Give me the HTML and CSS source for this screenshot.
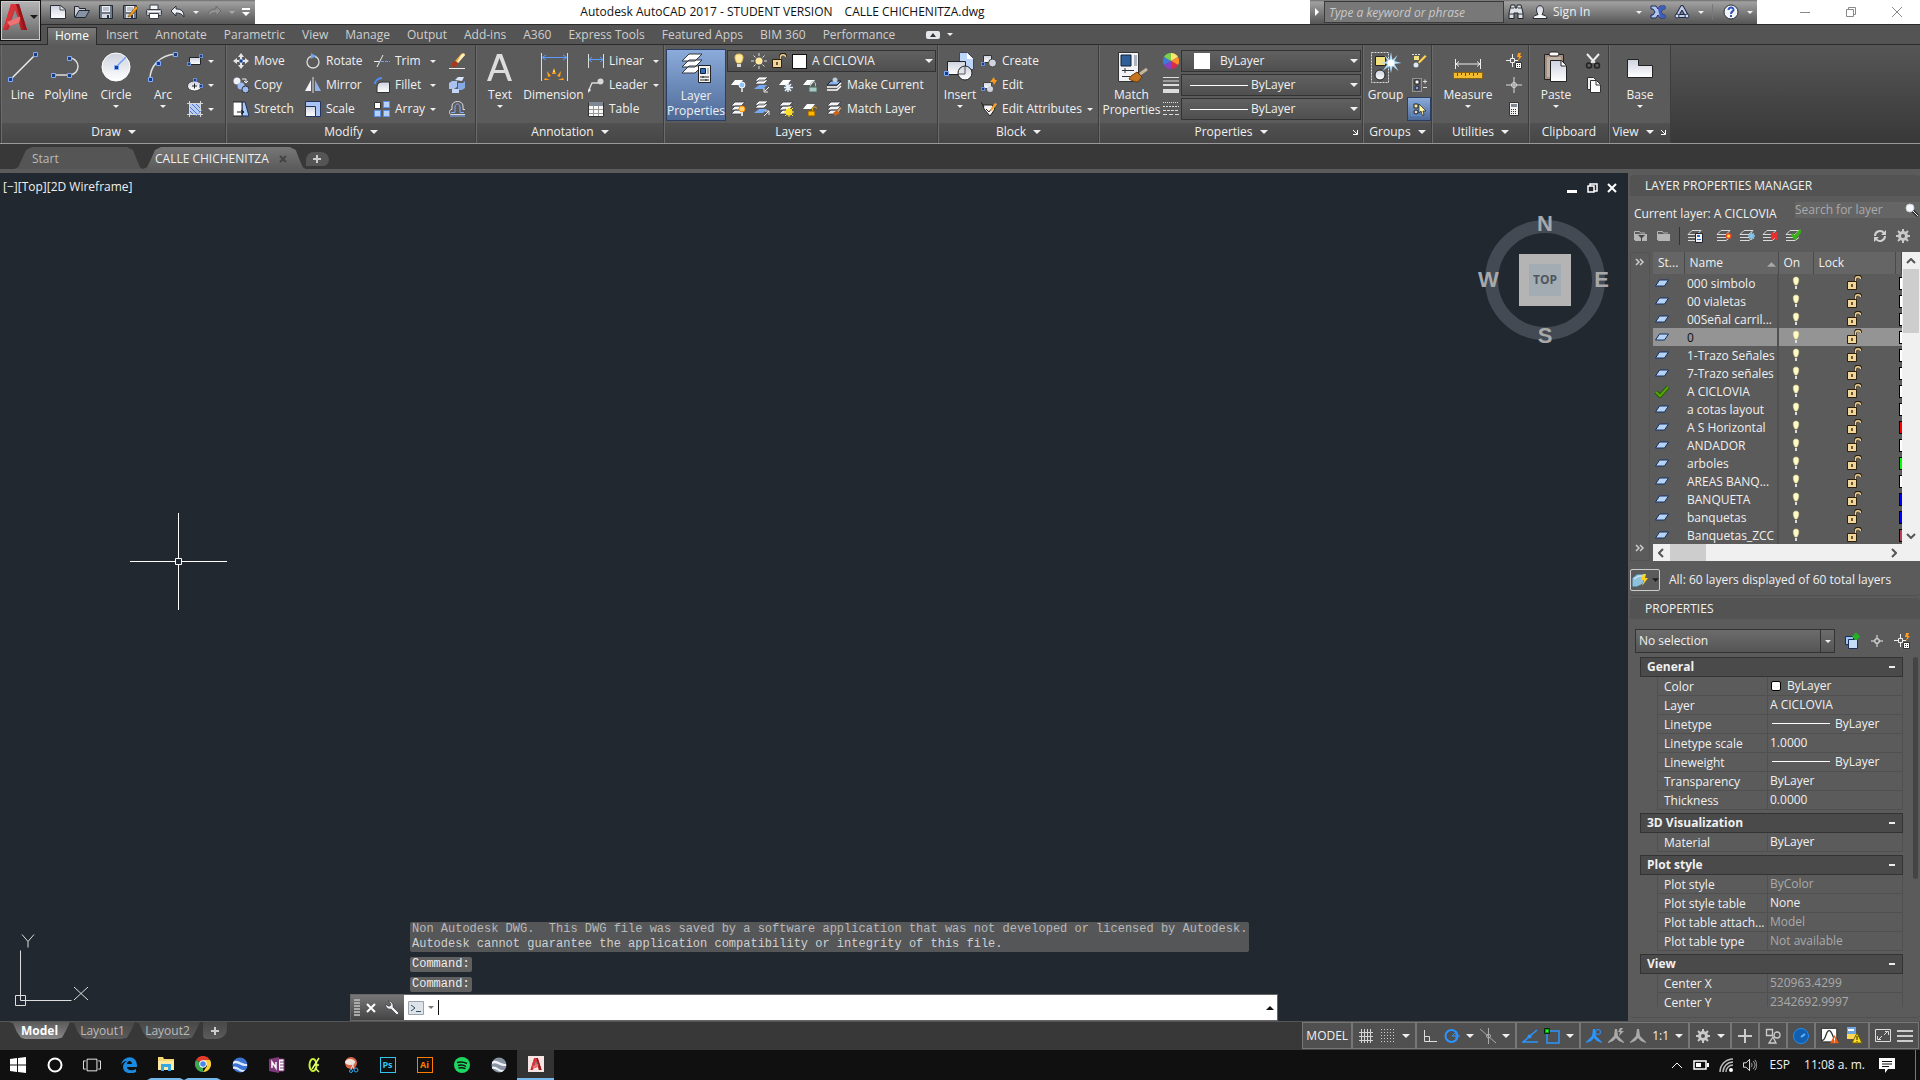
FILE: index.html
```
<!DOCTYPE html>
<html lang="en">
<head>
    <meta charset="UTF-8">
    <title>Autodesk AutoCAD 2017</title>
    <link rel="stylesheet" href="styles.css">
</head>
<body>
    <!-- Icon sprite -->
    <svg class="sprite" aria-hidden="true">
        <defs>
            <linearGradient id="silver" x1="0" y1="0" x2="0" y2="1"><stop offset="0" stop-color="#cdd2de"/><stop offset="1" stop-color="#fff"/></linearGradient>
            <linearGradient id="red" x1="0" y1="0" x2="1" y2="1"><stop offset="0" stop-color="#e8454a"/><stop offset="1" stop-color="#a3161b"/></linearGradient>
        </defs>
        <symbol id="dot" viewBox="0 0 5 5"><path d="M.5.5h4v4h-4z" fill="#1d3d7c" stroke="#7eaaff"/></symbol>
        <symbol id="caret" viewBox="0 0 8 4"><path d="M0 0h8L4 4z" fill="currentColor"/></symbol>
        <symbol id="logo" viewBox="0 0 24 26"><path d="M8 0h8l8 26h-6l-2-7-9 3-2 4H0z" fill="url(#red)"/><path d="M12 6l3 8-7 3z" fill="#8a8a8a"/><path d="M8 0l4 1-6 19-6 6z" fill="#d8343a"/><path d="M4 18l14-6-2 7-9 3z" fill="#ee7375"/><path d="M13 0l3 0 8 26h-3z" fill="#96151b"/></symbol>

        <!-- quick access -->
        <symbol id="new" viewBox="0 0 16 16"><path d="M.5 1.500h10l5 4v9H.5z" fill="url(#silver)" stroke="#2b2f36"/><path d="M10 2v4h5" fill="none" stroke="#555"/></symbol>
        <symbol id="open" viewBox="0 0 16 16"><path d="M.5 13V2.500h4l1 2h6v3" fill="#c9ccd4" stroke="#22272f"/><path d="M1 13.500l4-7h10.500l-4 7z" fill="#8593a5" stroke="#22272f"/></symbol>
        <symbol id="save" viewBox="0 0 16 16"><path d="M1.500 1.500h13v13h-13z" fill="#6f7a88" stroke="#242a33"/><path d="M4 2h8v6H4z" fill="#eef0f5"/><path d="M4 10h8v4H4z" fill="#d5d8df"/><path d="M5 4h6M5 6h6" stroke="#8b93a0"/><path d="M9 11h2v3H9z" fill="#30363f"/></symbol>
        <symbol id="saveas" viewBox="0 0 16 16"><use href="#save"/><path d="M7 11l7-9 2 2-7 8-3 1z" fill="#f5a623" stroke="#7a3d00" stroke-width=".6"/></symbol>
        <symbol id="print" viewBox="0 0 16 16"><path d="M4 1h8v5H4z" fill="#f3f5f9" stroke="#3a3f47"/><rect x=".5" y="5.500" width="15" height="6" rx="1" fill="#b9bec9" stroke="#3a3f47"/><path d="M3.500 9.500h9v5h-9z" fill="#fff" stroke="#3a3f47"/><path d="M2 7.500h12" stroke="#fff"/></symbol>
        <symbol id="undo" viewBox="0 0 16 16"><path d="M6 2v3c5 0 8 2 8 8-2-3-4-4-8-4v3L1 7z" fill="#eceff4" stroke="#2e333a"/></symbol>
        <symbol id="redo" viewBox="0 0 16 16"><path d="M10 2v3C5 5 2 7 2 13c2-3 4-4 8-4v3l5-5z" fill="#909090" stroke="#6a6a6a"/></symbol>
        <symbol id="more" viewBox="0 0 8 8"><path d="M0 0h8v2H0zM0 4h8L4 8z" fill="#fff"/></symbol>
        <symbol id="binoculars" viewBox="0 0 16 16"><path d="M3 1h4v3h2V1h4l2 8v5.500h-5V9H6v5.500H1V9z" fill="#dde1e8" stroke="#1f2329"/><path d="M3 4h3M10 4h3M1 10h5M10 10h5" stroke="#30353d"/></symbol>
        <symbol id="user" viewBox="0 0 16 16"><path d="M1 14.500c0-3 3-3 5-4l-1-2c-3-9 9-9 6 0l-1 2c2 1 5 1 5 4z" fill="url(#silver)" stroke="#252a31"/></symbol>
        <symbol id="exchange" viewBox="0 0 16 16"><path d="M1 2h5l2 3 2-3h5v3h-2l-2 3 2 3h2v3h-5l-2-3-2 3H1v-3h2l2-3-2-3H1z" fill="#b3c5ef" stroke="#1b2a5c"/><path d="M8 5l2-3h5v3h-2l-2 3 2 3h2v3h-5" fill="#3e60bd"/></symbol>
        <symbol id="a360" viewBox="0 0 16 16"><path d="M8 3l5 9H3z" fill="none" stroke="#1f2b4b" stroke-width="4" stroke-linejoin="round"/><path d="M8 3l5 9H3z" fill="none" stroke="#c2cce4" stroke-width="2" stroke-linejoin="round"/><circle cx="3" cy="12" r="2" fill="#dce3f3" stroke="#1f2b4b"/><circle cx="13" cy="12" r="2" fill="#dce3f3" stroke="#1f2b4b"/></symbol>
        <symbol id="help" viewBox="0 0 16 16"><circle cx="8" cy="8" r="7" fill="#f2f4fa" stroke="#2a3038"/><path d="M5.500 6c0-3.500 5.500-3 5 0-.3 1.500-2.500 1.500-2.500 4" fill="none" stroke="#3155b8" stroke-width="2"/><path d="M7 11h2v2H7z" fill="#3155b8"/></symbol>

        <!-- draw -->
        <symbol id="line" viewBox="0 0 32 32"><path d="M4 28L29 3" stroke="#eee" stroke-width="1.500"/><use href="#dot" x="1" y="26" width="5" height="5"/><use href="#dot" x="26" y="1" width="5" height="5"/></symbol>
        <symbol id="pline" viewBox="0 0 32 32"><path d="M3 24h16c12 0 12-17 0-17" fill="none" stroke="#ddd" stroke-width="1.500"/><use href="#dot" x="1" y="22" width="5" height="5"/><use href="#dot" x="17" y="22" width="5" height="5"/><use href="#dot" x="17" y="5" width="5" height="5"/></symbol>
        <symbol id="circle" viewBox="0 0 32 32"><circle cx="16" cy="16" r="14" fill="url(#silver)" stroke="#fff"/><path d="M16 16L26 6" stroke="#6fa0f5" stroke-width="1.500"/><use href="#dot" x="14" y="14" width="5" height="5"/></symbol>
        <symbol id="arc" viewBox="0 0 32 32"><path d="M3 28C3 16 12 4 29 3" fill="none" stroke="#ddd" stroke-width="1.500"/><use href="#dot" x="1" y="26" width="5" height="5"/><use href="#dot" x="9" y="10" width="5" height="5"/><use href="#dot" x="26" y="1" width="5" height="5"/></symbol>
        <symbol id="rect" viewBox="0 0 16 16"><path d="M2.500 4.500h11v7h-11z" fill="url(#silver)" stroke="#20242b"/><use href="#dot" y="9" width="4" height="4"/><use href="#dot" x="12" y="1" width="4" height="4"/></symbol>
        <symbol id="ellipse" viewBox="0 0 16 16"><ellipse cx="7.500" cy="9" rx="7" ry="5" fill="url(#silver)" stroke="#444"/><path d="M5 9h5M7.500 6.500v5" stroke="#222"/><use href="#dot" x="6" y="1" width="4" height="4"/><use href="#dot" x="12" y="7" width="4" height="4"/></symbol>
        <symbol id="hatch" viewBox="0 0 16 16"><path d="M3 3h10v10H3z" fill="#b9cdf3"/><path d="M3 6l7 7M3 10l3 3M5 3l8 8M9 3l4 4" stroke="#4d78ce"/><path d="M2.500 0v16M13.500 0v16M0 2.500h16M0 13.500h16" stroke="#d8d8d8"/><path d="M9 15l6-6" stroke="#6fa0f5"/></symbol>

        <!-- modify -->
        <symbol id="move" viewBox="0 0 16 16"><path d="M8 0l3 4H9v2H7V4H5zM8 16l-3-4h2v-2h2v2h2zM0 8l4-3v2h2v2H4v2zM16 8l-4 3V9h-2V7h2V5z" fill="#e6e6e6"/><use href="#dot" x="6" y="6" width="4" height="4"/></symbol>
        <symbol id="copy" viewBox="0 0 16 16"><circle cx="4" cy="4" r="3.500" fill="#eef1f8"/><circle cx="8" cy="9" r="3.500" fill="#9bbcf2"/><circle cx="12.500" cy="12.500" r="3.500" fill="#9bbcf2" stroke="#333"/><path d="M9 2h4v3M11 4l2 2 2-2" fill="none" stroke="#eee"/></symbol>
        <symbol id="stretch" viewBox="0 0 16 16"><path d="M9 1h3l4 14H9z" fill="#a8c8f8" stroke="#1b2f5f"/><path d="M0 1h9v14H0z" fill="#fff" stroke="#222"/><path d="M4 11h6M8 9l3 2-3 2" fill="none" stroke="#111"/></symbol>
        <symbol id="rotate" viewBox="0 0 16 16"><circle cx="8" cy="9" r="6" fill="none" stroke="#ddd" stroke-width="1.300"/><path d="M6 0l5 3-5 3z" fill="#6fa0f5"/></symbol>
        <symbol id="mirror" viewBox="0 0 16 16"><path d="M6 3v11H0z" fill="#f3f5fa"/><path d="M10 3v11h6z" fill="#8fb2ea"/><path d="M8 0v16" stroke="#ddd"/></symbol>
        <symbol id="scale" viewBox="0 0 16 16"><path d="M.5.5h15v15H.500z" fill="#a8c5f5" stroke="#22355f"/><path d="M.5 5.500h10v10H.500z" fill="url(#silver)" stroke="#22355f"/></symbol>
        <symbol id="trim" viewBox="0 0 16 16"><path d="M0 8.500h5" stroke="#eee"/><path d="M7 8.500h9" stroke="#6fa0f5" stroke-dasharray="3 1"/><path d="M3 14L9 2" stroke="#eee"/></symbol>
        <symbol id="fillet" viewBox="0 0 16 16"><path d="M3 15.500V10c0-3 2-5 5-5h7.500v10.500z" fill="url(#silver)" stroke="#333"/><path d="M1 7c0-3 3-6 7-6" fill="none" stroke="#4f8ff5" stroke-width="2"/></symbol>
        <symbol id="array" viewBox="0 0 16 16"><path d="M.5 1.500h6v6h-6z" fill="#fff" stroke="#333"/><path d="M9.500.5h6v6h-6zM.5 9.500h6v6h-6zM9.500 9.500h6v6h-6z" fill="#b6d1fb" stroke="#5d92ec"/></symbol>
        <symbol id="erase" viewBox="0 0 16 16"><path d="M6 8l7-8 3 2-7 8z" fill="#f5a93c"/><path d="M12 2l3-2 1 2-7 8-1-1z" fill="#fff0c0"/><path d="M3 10l3-2 3 2-2 4-4 0z" fill="#a8381c"/><path d="M0 15.500h16" stroke="#eee"/></symbol>
        <symbol id="explode" viewBox="0 0 16 16"><path d="M6 3l3-3h6l-2 4z" fill="#d9e5fa"/><path d="M0 6l3-2h5v6l-3 2H0z" fill="#a9c3ee"/><path d="M9 6h5l2-2v7l-3 2H9z" fill="#86aae4"/><path d="M3 12h7v4H3z" fill="#c4d6f5"/></symbol>
        <symbol id="offset" viewBox="0 0 16 16"><path d="M2 11.500h4V6c0-4 5-4 5 0v5.500h4M1 15h15" fill="none" stroke="#7eaaff"/><path d="M16 8.500h-2V5c0-6-11-6-11 0v3.500H2c-2 1-2 5 0 5h14" fill="none" stroke="#ddd"/></symbol>

        <!-- annotation -->
        <symbol id="text" viewBox="0 0 32 32"><path d="M3 30L13 3h5l10 27h-4l-3-8H10l-3 8zM11 19h9L15.500 7z" fill="#dcdcdc"/></symbol>
        <symbol id="dimension" viewBox="0 0 32 32"><path d="M3.500 2v28M29.500 2v28" stroke="#ddd"/><path d="M5 6.500h23M8 4L4 6.500 8 9M25 4l4 2.500L25 9" fill="none" stroke="#5a9bff"/><path d="M16 17l2 6h-4zM9 20l4 5-3 1zM23 20l-4 5 3 1zM7 27l5 2H6zM25 27l-5 2h6z" fill="#ff9d1e"/><path d="M15 21l1-3 1 3zM9 21l3 3" fill="#ffe76e"/></symbol>
        <symbol id="linear" viewBox="0 0 16 16"><path d="M.5 1v14M15.500 1v14" stroke="#ddd"/><path d="M1 6.500h14M4 4L1 6.500 4 9M12 4l3 2.500L12 9" fill="none" stroke="#5a9bff"/></symbol>
        <symbol id="leader" viewBox="0 0 16 16"><path d="M0 15l4-9h6" fill="none" stroke="#ddd" stroke-width="1.300"/><circle cx="12.500" cy="4.500" r="3" fill="#d9d9d9"/><path d="M0 16l1-5 2 2z" fill="#eee"/></symbol>
        <symbol id="table" viewBox="0 0 16 16"><path d="M.5 1.500h15v14H.500z" fill="#f7f7f7" stroke="#333"/><path d="M1 1h14v4H1z" fill="#7f8794"/><path d="M1 8.500h14M1 12.500h14M5.500 5v10M10.500 5v10" stroke="#999"/></symbol>

        <!-- layers -->
        <symbol id="stack" viewBox="0 0 16 16"><path d="M5 1h10l-4 4H1zM5 5h10l-4 4H1zM5 9h10l-4 4H1z" fill="#f4f6fa" stroke="#3c3f45" stroke-width=".8"/></symbol>
        <symbol id="layerprops" viewBox="0 0 32 32"><path d="M9 14h13l-7 7H2zM9 8h13l-7 7H2zM9 2h13l-7 7H2z" fill="#fff" stroke="#2f3742"/><path d="M18.500 13.500h12v17h-12z" fill="#f4f4f4" stroke="#222"/><path d="M20.500 16.500h5v5h-5z" fill="#2f6fc4" stroke="#123"/><path d="M27 16h2v6h-2z" fill="#bbb"/><path d="M20 25h9M20 28h9M23 24v2M26 27v2" stroke="#222"/></symbol>
        <symbol id="sheet" viewBox="0 0 16 16"><path d="M5 3h8L9 8H1z" fill="#fff"/></symbol>
        <symbol id="layoff" viewBox="0 0 16 16"><use href="#sheet"/><circle cx="12" cy="8" r="3" fill="#8fc3ff" stroke="#fff"/><path d="M12 11v4" stroke="#ccc" stroke-width="2"/></symbol>
        <symbol id="layiso" viewBox="0 0 16 16"><path d="M5 0h9l-4 4H1zM5 3h9l-4 4H1z" fill="#fff" stroke="#444" stroke-width=".7"/><path d="M5 8h8l-4 4H0z" fill="#76aaf0"/><path d="M15 10l-4 4M10 11v4h4" fill="none" stroke="#eee"/></symbol>
        <symbol id="layuniso" viewBox="0 0 16 16"><path d="M5 0h9l-4 4H1zM5 3h9l-4 4H1z" fill="#fff" stroke="#444" stroke-width=".7"/><path d="M5 8h8l-4 4H0z" fill="#76aaf0"/><path d="M10 15l5-5M11 10h4v4" fill="none" stroke="#eee"/></symbol>
        <symbol id="layfrz" viewBox="0 0 16 16"><use href="#sheet"/><path d="M10 6v9M6 10.500h9M7 7l6 7M13 7l-6 7" stroke="#e3f1ff" stroke-width="1.500"/></symbol>
        <symbol id="laylck" viewBox="0 0 16 16"><use href="#sheet"/><path d="M8.500 9.500V7c0-3 5-3 5 0v2.500" fill="none" stroke="#aac4bf"/><path d="M7 10h8v5H7z" fill="#a9c9c2" stroke="#4c6b65"/></symbol>
        <symbol id="laycur" viewBox="0 0 16 16"><path d="M5 4h10l-4 4H1z" fill="#82b1f2" stroke="#222"/><path d="M1 10h10l4-4M1 13h10l4-4" fill="none" stroke="#fff" stroke-width="1.500"/><circle cx="9" cy="3" r="2.500" fill="#bcd"/></symbol>
        <symbol id="layon" viewBox="0 0 16 16"><use href="#stack"/><circle cx="12" cy="8" r="3" fill="#ffd36a" stroke="#ff8c00"/><path d="M12 11v4" stroke="#ddd" stroke-width="2"/></symbol>
        <symbol id="layunfrz" viewBox="0 0 16 16"><use href="#stack"/><circle cx="11" cy="11" r="3.500" fill="#ffe11a"/><path d="M11 5v11M6 11h10M7 7l8 8M15 7l-8 8" stroke="#ffdc2e"/></symbol>
        <symbol id="layulk" viewBox="0 0 16 16"><use href="#sheet"/><path d="M10.500 11V7.500c0-2 4-2 4 0" fill="none" stroke="#ffb400"/><path d="M6 10h7v5H6z" fill="#ffb400" stroke="#8b5b00"/></symbol>
        <symbol id="laymch" viewBox="0 0 16 16"><use href="#stack"/><path d="M7 12l4-3 3 3-5 3z" fill="#c8651b"/><path d="M12 9l3-2" stroke="#c8a070" stroke-width="2"/></symbol>
        <symbol id="bulb" viewBox="0 0 16 16"><path d="M8 1c-6 0-4 6-2 9h4c2-3 4-9-2-9z" fill="#ffe9a0" stroke="#e8bf57"/><path d="M6 11h4v3H6z" fill="#d8d8d8"/></symbol>
        <symbol id="sun" viewBox="0 0 16 16"><circle cx="8" cy="8" r="3.500" fill="#ffeaa0"/><path d="M8 0v3M8 13v3M0 8h3M13 8h3M2.500 2.500l2 2M11.500 11.500l2 2M13.500 2.500l-2 2M4.500 11.500l-2 2" stroke="#ddd"/></symbol>
        <symbol id="unlock" viewBox="0 0 16 16"><path d="M9.500 7V4c0-4 5-4 5-1v1" fill="none" stroke="#2d200c" stroke-width="3"/><path d="M9.500 7V4c0-3 5-3 5 0" fill="none" stroke="#ecd19a" stroke-width="1.500"/><path d="M1.500 6.500h9v8h-9z" fill="#f2d79d" stroke="#2d200c"/><path d="M6 9v3" stroke="#3a2c10" stroke-width="1.500"/></symbol>

        <!-- block -->
        <symbol id="insert" viewBox="0 0 32 32"><path d="M15.500 1.500h8l6 6v11h-14z" fill="#bcd6fa" stroke="#445"/><path d="M23 2l6 6h-6z" fill="#fff"/><path d="M3.500 10.500h18v13h-18z" fill="url(#silver)" stroke="#222"/><circle cx="21" cy="22" r="7" fill="url(#silver)" stroke="#222"/><path d="M21 15v8h-7" fill="none" stroke="#555"/><use href="#dot" y="20" width="5" height="5"/></symbol>
        <symbol id="create" viewBox="0 0 16 16"><path d="M2.500 2.500h8v7h-8z" fill="url(#silver)" stroke="#333"/><circle cx="11.500" cy="10" r="4" fill="#cfd4de" stroke="#444"/><use href="#dot" y="9" width="4" height="4"/></symbol>
        <symbol id="edit" viewBox="0 0 16 16"><path d="M2.500 5.500h8v6h-8z" fill="url(#silver)" stroke="#444"/><circle cx="9" cy="12" r="3" fill="#cfd4de"/><use href="#dot" y="10" width="4" height="4"/><path d="M13 0l1 3h2l-3 5-1-3-3 0z" fill="#ff9b1a"/></symbol>
        <symbol id="attr" viewBox="0 0 16 16"><path d="M2 4h9l3 4-5 7-6-7z" fill="#f4f4f4" stroke="#222"/><path d="M0 1l3 5M5 8l3 3 6-8" fill="none" stroke="#222"/><path d="M9 9l5-7 2 1-5 7z" fill="#ffa72b"/></symbol>

        <!-- properties -->
        <symbol id="matchprops" viewBox="0 0 32 32"><path d="M2.500 1.500h20v29h-20z" fill="#f1f3f7" stroke="#333"/><path d="M5 4h10v11H5z" fill="#2f5f96" stroke="#123"/><path d="M18 4h3v11h-3z" fill="#aeb4bf"/><path d="M6 19.500h12M6 25.500h8M9 17v5" stroke="#333"/><path d="M15 25l6-4 5 5-4 5c-4 0-7-2-9-3z" fill="#c47321" stroke="#6b3a0a"/><path d="M24 23l7-5" stroke="#c8b59a" stroke-width="3"/></symbol>
        <symbol id="wheel" viewBox="0 0 16 16"><path d="M8 8V0a8 8 0 0 1 7 4z" fill="#ffe56b"/><path d="M8 8l7-4a8 8 0 0 1 0 8z" fill="#ff8d2a"/><path d="M8 8l7 4a8 8 0 0 1-7 4z" fill="#d72e47"/><path d="M8 8v8a8 8 0 0 1-7-4z" fill="#8a3fc7"/><path d="M8 8l-7 4a8 8 0 0 1 0-8z" fill="#3f79e0"/><path d="M8 8L1 4a8 8 0 0 1 7-4z" fill="#7fcf4e"/></symbol>
        <symbol id="weights" viewBox="0 0 16 16"><path d="M0 .5h16M0 4h16" stroke="#ddd"/><path d="M0 8h16" stroke="#ddd" stroke-width="2"/><path d="M0 14h16" stroke="#ddd" stroke-width="4"/></symbol>
        <symbol id="types" viewBox="0 0 16 16"><g stroke="#ddd"><path d="M0 1.500h16" stroke-dasharray="1 1"/><path d="M0 5.500h16" stroke-dasharray="2 1"/><path d="M0 9.500h16" stroke-dasharray="3 1"/><path d="M0 13.500h16" stroke-dasharray="4 2"/></g></symbol>
        <symbol id="launch" viewBox="0 0 6 6"><path d="M1 1l4 4M5.500 1v4.500H1" fill="none" stroke="#fff"/></symbol>

        <!-- groups, utilities, clipboard, view -->
        <symbol id="group" viewBox="0 0 32 32"><path d="M1.500 1.500h17v30h-17z" fill="none" stroke="#ddd" stroke-dasharray="2 1"/><path d="M5.500 5.500h10v9h-10z" fill="#f2df7e" stroke="#222"/><circle cx="10" cy="24" r="5" fill="url(#silver)" stroke="#222"/><path d="M21 1l1.500 8 5-5-3 6 7 2-7 1 4 7-6-5-1.500 7-1.500-7-7 5 5-7-6-1 6-2-3-6 5 5z" fill="#a9dbff"/><circle cx="21" cy="12" r="3.500" fill="#fff"/></symbol>
        <symbol id="ungroup" viewBox="0 0 16 16"><path d="M1 1.500h9" stroke="#ddd" stroke-dasharray="2 1"/><path d="M3 3h5v4H3z" fill="#f2df7e"/><circle cx="5" cy="12" r="2.500" fill="#dfe8f2"/><path d="M7 9l7-7 1.500 1.500-7 7z" fill="#ffd34e"/></symbol>
        <symbol id="groupedit" viewBox="0 0 16 16"><path d="M1.500 1.500h9v13h-9z" fill="none" stroke="#ccc" stroke-dasharray="1 1"/><path d="M4 3h4v4H4z" fill="#fff" stroke="#222"/><circle cx="6" cy="11" r="2" fill="#79a6f0" stroke="#222"/><path d="M12 4.500h4M14 2.500v4M12 10.500h4" stroke="#ddd"/></symbol>
        <symbol id="groupsel" viewBox="0 0 16 16"><path d="M.5 1.500h10v13H.500z" fill="none" stroke="#5fa2ff" stroke-dasharray="1 1"/><path d="M3 3h4v4H3z" fill="#f2e8a0" stroke="#222"/><circle cx="5" cy="11" r="2" fill="#ddd" stroke="#222"/><path d="M8 3l7 7-3 0 1 4-2 0-1-4-2 2z" fill="#fff3a6" stroke="#222" stroke-width=".7"/></symbol>
        <symbol id="measure" viewBox="0 0 32 32"><path d="M3.500 8v10M28.500 8v10M4 13h24M7 10.500L4 13l3 2.500M25 10.500l3 2.500-3 2.500" fill="none" stroke="#eee"/><path d="M1.500 21.500h29v6h-29z" fill="#f3bc2e" stroke="#8a6410"/><path d="M5.500 22v3M9.500 22v2M13.500 22v3M17.500 22v2M21.500 22v3M25.500 22v2" stroke="#6b4c06"/></symbol>
        <symbol id="quickselect" viewBox="0 0 16 16"><path d="M0 7.500h12M6.500 1v13" stroke="#eee"/><path d="M4.500 5.500h4v4h-4z" fill="#5b5b5b" stroke="#eee"/><path d="M9.500 9.500h6v6h-6z" fill="#fff" stroke="#333"/><path d="M11 11.500h3M11 13.500h3" stroke="#333" stroke-dasharray="1 1"/><path d="M12 0h3l-1 3h2l-4 5 1-4h-2z" fill="#ff9b1a"/></symbol>
        <symbol id="target" viewBox="0 0 16 16"><path d="M0 8h16M8 0v16" stroke="#ddd"/><circle cx="8" cy="8" r="2.500" fill="none" stroke="#ddd"/></symbol>
        <symbol id="pick" viewBox="0 0 16 16"><path d="M2 8h12M8 2v12" stroke="#eee"/><path d="M6 6h4v4H6z" fill="#5b5b5b" stroke="#eee"/></symbol>
        <symbol id="calc" viewBox="0 0 16 16"><path d="M3.500 1.500h9v13h-9z" fill="#f1f1f1" stroke="#333"/><path d="M5 3h6v3H5z" fill="#7e8793"/><path d="M5 8.500h6M5 10.500h6M5 12.500h6" stroke="#333" stroke-dasharray="1 1"/></symbol>
        <symbol id="paste" viewBox="0 0 32 32"><path d="M4.500 3.500h19v25h-19z" fill="#a58f80" stroke="#222"/><path d="M7 6h14v20H7z" fill="#beb0a5"/><rect x="9" y="1" width="10" height="4" rx="2" fill="#fff" stroke="#222"/><path d="M10.500 9.500h11l5 5v16h-16z" fill="url(#silver)" stroke="#222"/><path d="M21 10v5h5" fill="#fff" stroke="#222"/></symbol>
        <symbol id="cut" viewBox="0 0 16 16"><path d="M2 1l8 9M14 1L6 10" stroke="#eee" stroke-width="2"/><circle cx="4" cy="12.500" r="2.500" fill="none" stroke="#222" stroke-width="1.500"/><circle cx="12" cy="12.500" r="2.500" fill="none" stroke="#222" stroke-width="1.500"/></symbol>
        <symbol id="clipcopy" viewBox="0 0 16 16"><path d="M2.500.5h6l2 2v10h-8z" fill="#eee" stroke="#333"/><path d="M5.500 3.500h6l4 4v8h-10z" fill="#fff" stroke="#333"/><path d="M11 4v4h4" fill="none" stroke="#333"/></symbol>
        <symbol id="base" viewBox="0 0 32 32"><path d="M3.500 8.500h11v6h14v12h-25z" fill="url(#silver)" stroke="#222"/></symbol>

        <!-- palettes -->
        <symbol id="lens" viewBox="0 0 16 16"><circle cx="6" cy="6" r="4" fill="#f4f8ff" stroke="#ccc"/><path d="M9 9l5 5" stroke="#222" stroke-width="3"/><path d="M9 9l5 5" stroke="#fff"/></symbol>
        <symbol id="folder" viewBox="0 0 16 16"><path d="M2 13V6h12v7z" fill="#b5b5b5"/><path d="M1.500 12V3.500h5l1 1.500H12" fill="none" stroke="#b5b5b5"/></symbol>
        <symbol id="filter" viewBox="0 0 16 16"><use href="#folder"/><path d="M5 7h7L9 10v3H8v-3z" fill="#444"/></symbol>
        <symbol id="pstack" viewBox="0 0 16 16"><path d="M5 2.500h9l-4 4H1zM1 9.500h9l4-3M1 12.500h9l4-3" fill="none" stroke="#ddd"/></symbol>
        <symbol id="states" viewBox="0 0 16 16"><use href="#pstack"/><path d="M8.500 5.500h7v9h-7z" fill="#f4f4f4" stroke="#223"/><path d="M10 7h3v2h-3z" fill="#2d6fc4"/><path d="M10 11.500h4" stroke="#2d6fc4"/></symbol>
        <symbol id="laynew" viewBox="0 0 16 16"><use href="#pstack"/><circle cx="12.500" cy="8" r="3" fill="#f44b1e"/><circle cx="12.500" cy="8" r="1.500" fill="#ffe84b"/></symbol>
        <symbol id="layvp" viewBox="0 0 16 16"><use href="#pstack"/><path d="M12.500 4v8M9 8h7M10 5.500l5 5M15 5.500l-5 5" stroke="#86c5ea" stroke-width="1.500"/></symbol>
        <symbol id="laydel" viewBox="0 0 16 16"><use href="#pstack"/><path d="M9.500 5l6 6M15.500 5l-6 6" stroke="#f52a2a" stroke-width="3"/></symbol>
        <symbol id="layset" viewBox="0 0 16 16"><use href="#pstack"/><path d="M7 6l3 4 6-8" fill="none" stroke="#35b412" stroke-width="3"/></symbol>
        <symbol id="refresh" viewBox="0 0 16 16"><path d="M3 8a5 5 0 0 1 9-3M13 8a5 5 0 0 1-9 3" fill="none" stroke="#d0d0d0" stroke-width="2"/><path d="M14 2v5H9zM2 14V9h5z" fill="#d0d0d0"/></symbol>
        <symbol id="gear" viewBox="0 0 16 16"><circle cx="8" cy="8" r="3.500" fill="none" stroke="#c9c9c9" stroke-width="3"/><path d="M8 1v3M8 12v3M1 8h3M12 8h3M3 3l2 2M11 11l2 2M13 3l-2 2M5 11l-2 2" stroke="#c9c9c9" stroke-width="2"/></symbol>
        <symbol id="layer" viewBox="0 0 16 8"><path d="M5.500 1h9l-4 6h-9z" fill="#b5d3f5" stroke="#17305e"/></symbol>
        <symbol id="check" viewBox="0 0 16 13"><path d="M2 7l4 4 8-9" fill="none" stroke="#1f5a08" stroke-width="4"/><path d="M2 7l4 4 8-9" fill="none" stroke="#55a800" stroke-width="2"/></symbol>
        <symbol id="on" viewBox="0 0 8 14"><path d="M4 1c-4 0-3 5-1 8h2c2-3 3-8-1-8z" fill="#fffbc6" stroke="#d9cf8a" stroke-width=".6"/><path d="M3 10h2v3H3z" fill="#ddd"/></symbol>
        <symbol id="chevrons" viewBox="0 0 10 8"><path d="M1 1l3 3-3 3M5 1l3 3-3 3" fill="none" stroke="#ccc" stroke-width="1.500"/></symbol>
        <symbol id="up" viewBox="0 0 10 6"><path d="M1 5l4-4 4 4" fill="none" stroke="currentColor" stroke-width="2"/></symbol>
        <symbol id="down" viewBox="0 0 10 6"><path d="M1 1l4 4 4-4" fill="none" stroke="currentColor" stroke-width="2"/></symbol>
        <symbol id="left" viewBox="0 0 6 10"><path d="M5 1L1 5l4 4" fill="none" stroke="currentColor" stroke-width="2"/></symbol>
        <symbol id="right" viewBox="0 0 6 10"><path d="M1 1l4 4-4 4" fill="none" stroke="currentColor" stroke-width="2"/></symbol>
        <symbol id="isolate" viewBox="0 0 16 16"><path d="M0 6l5-4h9l-3 10-6 3H0z" fill="#8fc0dc" stroke="#45606e"/><path d="M2 7l5-3h5" fill="none" stroke="#e6f4ff"/><path d="M11 2h3l-1 4h3l-6 8 2-6h-3z" fill="#ffd21f"/></symbol>
        <symbol id="pickadd" viewBox="0 0 16 16"><path d="M1.500 3.500h8v8h-8z" fill="#9cc3f2" stroke="#1c2f55"/><path d="M4.500 6.500h9v9h-9z" fill="#c5dcf8" stroke="#1c2f55"/><path d="M12 0v7M8.500 3.500h7" stroke="#20b520" stroke-width="3"/></symbol>

        <!-- status bar -->
        <symbol id="grid" viewBox="0 0 16 16"><path d="M3.500 1v14M6.500 1v14M9.500 1v14M12.500 1v14" stroke="#d5d5d5"/><path d="M1 4.500h14M1 8.500h14M1 12.500h14" stroke="#d5d5d5" stroke-dasharray="2 1"/></symbol>
        <symbol id="snap" viewBox="0 0 16 16"><path d="M1 1.500h14M1 4.500h14M1 7.500h14M1 10.500h14M1 13.500h14" stroke="#ccc" stroke-dasharray="1 2"/></symbol>
        <symbol id="ortho" viewBox="0 0 16 16"><path d="M2.500 2v11.500H15M2.500 8.500h5v5" fill="none" stroke="#ddd"/></symbol>
        <symbol id="polar" viewBox="0 0 16 16"><circle cx="7.500" cy="8" r="6" fill="none" stroke="#2b95ff" stroke-width="2"/><path d="M8 8h8M8 8l5-5M12 5v6" fill="none" stroke="#2b95ff"/></symbol>
        <symbol id="iso" viewBox="0 0 16 16"><path d="M8.500 0v16M0 1l16 14" stroke="#aaa"/><circle cx="8.500" cy="8" r="2" fill="none" stroke="#aaa"/></symbol>
        <symbol id="otrack" viewBox="0 0 16 16"><path d="M15 2L1 14h15" fill="none" stroke="#2b95ff" stroke-width="1.500"/><circle cx="7.500" cy="8.500" r="2" fill="#2b95ff"/></symbol>
        <symbol id="osnap" viewBox="0 0 16 16"><path d="M3 3h12v12H3z" fill="none" stroke="#2b95ff" stroke-width="1.500"/><path d="M.5.5h5v5h-5z" fill="#0a0" stroke="#021"/><path d="M2 2h2v2H2z" fill="#2f2"/></symbol>
        <symbol id="scaleicon" viewBox="0 0 16 16"><path d="M7 1h2l1 7 6 6v1l-5-2-3-3-3 3-5 2v-1l6-6z" fill="currentColor"/></symbol>
        <symbol id="annovis" viewBox="0 0 16 16"><use href="#scaleicon"/><circle cx="12" cy="4" r="2.500" fill="#505050" stroke="currentColor"/></symbol>
        <symbol id="annoauto" viewBox="0 0 16 16"><use href="#scaleicon"/><path d="M12 0l-2 4h2l-1 4 5-5h-3l2-3z" fill="currentColor"/></symbol>
        <symbol id="plus" viewBox="0 0 16 16"><path d="M1 8h14M8 1v14" stroke="#ccc" stroke-width="2"/></symbol>
        <symbol id="shapes" viewBox="0 0 16 16"><path d="M1.500 1.500h6v6h-6zM8 9l3 6H4z" fill="none" stroke="#ccc" stroke-width="1.300"/><circle cx="12" cy="7" r="3" fill="none" stroke="#ccc" stroke-width="1.300"/></symbol>
        <symbol id="perf" viewBox="0 0 16 16"><circle cx="8" cy="8" r="7.500" fill="#115fae" stroke="#1f8cf5"/><path d="M8 9l4-3" stroke="#62b6ff" stroke-width="2"/></symbol>
        <symbol id="trace" viewBox="0 0 20 18"><path d="M.5.5h17v15H.500z" fill="#fff" stroke="#222"/><path d="M1 14c5 0 4-11 8-11s4 11 8 11" fill="none" stroke="#333" stroke-width="1.500"/><path d="M15 8l5 9H10z" fill="#f05a13"/><path d="M15 11v3M15 15v1" stroke="#fff"/></symbol>
        <symbol id="warn" viewBox="0 0 16 18"><path d="M1 0h9v12H1z" fill="#6ea6e4"/><path d="M1 7h9v5H1z" fill="#ffd955"/><path d="M2 3h6" stroke="#fff" stroke-width="2"/><path d="M11 6l5 10H6z" fill="#ffe01a" stroke="#775e00"/><path d="M11 9v4M11 14v1" stroke="#222"/></symbol>
        <symbol id="clean" viewBox="0 0 16 14"><path d="M.5.5h15v12H.500z" fill="none" stroke="#ddd"/><path d="M9 6l4-4M10 2.500h3.500V6M7 7l-4 4M2.500 7v3.500H6" fill="none" stroke="#ddd"/></symbol>
        <symbol id="burger" viewBox="0 0 16 16"><path d="M0 3h16M0 8h16M0 13h16" stroke="#ccc" stroke-width="2"/></symbol>
        <symbol id="wrench" viewBox="0 0 16 16"><path d="M3 1l3 3-1 2-2 0-2-2c-1 3 2 6 5 5l6 6 2-2-6-6c1-3-2-6-5-6z" fill="#eef1f5" stroke="#333" stroke-width=".7"/></symbol>
        <symbol id="prompt" viewBox="0 0 16 14"><path d="M.5.5h15v13H.500z" fill="#dde3ea" stroke="#9aa3ad"/><path d="M3 4l4 3-4 3M8 10.500h5" fill="none" stroke="#3a4a58"/></symbol>

        <!-- taskbar -->
        <symbol id="win" viewBox="0 0 16 16"><path d="M0 2l7-1v6.500H0zM8 1l8-1v7.500H8zM0 8.500h7V15l-7-1zM8 8.500h8V16l-8-1z" fill="#fff"/></symbol>
        <symbol id="cortana" viewBox="0 0 16 16"><circle cx="8" cy="8" r="6.500" fill="none" stroke="#fff" stroke-width="2"/></symbol>
        <symbol id="taskview" viewBox="0 0 20 16"><path d="M4.500 1.500h11v13h-11zM3 3.500H.500v9H3M17 3.500h2.500v9H17" fill="none" stroke="#fff"/></symbol>
        <symbol id="edge" viewBox="0 0 16 16"><path d="M0 8c2-10 16-11 16 1v1H6c0 4 6 4 9 2v3C10 18 2 16 2 10c0-3 2-5 4-6-3 0-5 2-6 4zM6 7h5c0-4-5-4-5 0z" fill="#1a8be0"/></symbol>
        <symbol id="files" viewBox="0 0 16 16"><path d="M0 14V1h5l1 2h10v11z" fill="#f8d775"/><path d="M0 5h16v9H0z" fill="#ffe9a2"/><path d="M3 15V8h10v7h-3v-4H6v4z" fill="#35a7e5"/></symbol>
        <symbol id="chrome" viewBox="0 0 16 16"><path d="M8 8L1 4a8 8 0 0 1 14 0z" fill="#e33b2e"/><path d="M1 4l7 4 0 8A8 8 0 0 1 1 4z" fill="#3fa652"/><path d="M8 4h7a8 8 0 0 1-7 12l4-6z" fill="#fbce3b"/><circle cx="8" cy="8" r="3.700" fill="#fff"/><circle cx="8" cy="8" r="2.800" fill="#4a86ed"/></symbol>
        <symbol id="earth" viewBox="0 0 16 16"><circle cx="8" cy="8" r="7.500" fill="#3b74d4"/><path d="M1 5c4-4 8 2 14 2v2C9 10 6 4 1 7zM1 10c4-2 7 4 12 3l-2 2c-4 0-6-4-10-3z" fill="#dce9ff"/></symbol>
        <symbol id="earthpro" viewBox="0 0 16 16"><circle cx="8" cy="8" r="7.500" fill="#8793a3"/><path d="M1 5c4-4 8 2 14 2v2C9 10 6 4 1 7zM1 10c4-2 7 4 12 3l-2 2c-4 0-6-4-10-3z" fill="#eef2f6"/></symbol>
        <symbol id="onenote" viewBox="0 0 16 16"><path d="M9 2h6v12H9z" fill="#fff" stroke="#80397b"/><path d="M11 5h4M11 8h4M11 11h4" stroke="#80397b"/><path d="M0 2l10-2v16L0 14z" fill="#80397b"/><path d="M3 11V5l4 6V5" fill="none" stroke="#fff" stroke-width="1.500"/></symbol>
        <symbol id="qgis" viewBox="0 0 16 16"><ellipse cx="7" cy="8" rx="3.500" ry="6" fill="none" stroke="#c8f03a" stroke-width="2"/><path d="M6 12l7-11M8 8h5M9 11l4 4" fill="none" stroke="#e3ff70" stroke-width="1.500"/></symbol>
        <symbol id="snip" viewBox="0 0 16 16"><circle cx="8" cy="6" r="6" fill="#d9674b"/><ellipse cx="7" cy="5" rx="5" ry="3" fill="#f2e3dc"/><path d="M8 4l3 8M12 4L8 12" stroke="#ddd"/><circle cx="8" cy="14" r="1.500" fill="none" stroke="#39a4e5"/><circle cx="13" cy="13" r="2" fill="none" stroke="#39a4e5"/></symbol>
        <symbol id="spotify" viewBox="0 0 16 16"><circle cx="8" cy="8" r="8" fill="#1ed760"/><path d="M3 5.500c4-1 7-.5 10 1M4 8.500c3-1 6-.5 8 1M4.500 11c3-.7 5-.3 7 .7" fill="none" stroke="#111" stroke-width="1.500"/></symbol>
        <symbol id="battery" viewBox="0 0 16 10"><path d="M1 1h12v8H1z" fill="none" stroke="#fff" stroke-width="1.500"/><path d="M3 3h5v4H3zM14 3h2v4h-2z" fill="#fff"/></symbol>
        <symbol id="wifi" viewBox="0 0 14 14"><path d="M1 14A13 13 0 0 1 14 1M4 14A10 10 0 0 1 14 4M7 14a7 7 0 0 1 7-7" fill="none" stroke="#bbb" stroke-width="1.500"/><circle cx="12" cy="12" r="2" fill="#fff"/></symbol>
        <symbol id="sound" viewBox="0 0 16 14"><path d="M.5 4.500h3l4-4v13l-4-4h-3z" fill="none" stroke="#fff"/><path d="M9.500 4.500c1 1 1 4 0 5M11.500 2.500c3 3 3 6 0 9M13.500 1c3 4 3 8 0 12" fill="none" stroke="#bbb"/></symbol>
        <symbol id="note" viewBox="0 0 16 16"><path d="M0 1h16v11H9l-3 4v-4H0z" fill="#fff"/><path d="M3 4.500h10M3 7h10M3 9.500h7" stroke="#111"/></symbol>
    </svg>

    <header class="titlebar">
        <button class="app-button" aria-label="Application menu"><svg class="logo"><use href="#logo"/></svg><svg class="caret dark"><use href="#caret"/></svg></button>
        <div class="quick-access">
            <button aria-label="New"><svg><use href="#new"/></svg></button>
            <button aria-label="Open"><svg><use href="#open"/></svg></button>
            <button aria-label="Save"><svg><use href="#save"/></svg></button>
            <button aria-label="Save As"><svg><use href="#saveas"/></svg></button>
            <button aria-label="Plot"><svg><use href="#print"/></svg></button>
            <button aria-label="Undo"><svg><use href="#undo"/></svg></button>
            <svg class="caret tiny"><use href="#caret"/></svg>
            <button aria-label="Redo"><svg><use href="#redo"/></svg></button>
            <svg class="caret tiny muted"><use href="#caret"/></svg>
            <button class="qa-more" aria-label="Customize"><svg class="more"><use href="#more"/></svg></button>
        </div>
        <h1 class="app-title"><span>Autodesk AutoCAD 2017 - STUDENT VERSION</span><span>CALLE CHICHENITZA.dwg</span></h1>
        <div class="infocenter">
            <svg class="play" viewBox="0 0 4 8"><path d="M0 0l4 4-4 4z" fill="#fff"/></svg>
            <input class="keyword" type="text" placeholder="Type a keyword or phrase" aria-label="Keyword">
            <button aria-label="Search"><svg><use href="#binoculars"/></svg></button>
            <button class="sign-in"><svg><use href="#user"/></svg>Sign In</button>
            <svg class="caret tiny sign-caret"><use href="#caret"/></svg>
            <button aria-label="Exchange apps"><svg><use href="#exchange"/></svg></button>
            <button aria-label="Stay connected"><svg><use href="#a360"/></svg></button>
            <svg class="caret tiny"><use href="#caret"/></svg>
            <button class="help" aria-label="Help"><svg><use href="#help"/></svg></button>
            <svg class="caret tiny"><use href="#caret"/></svg>
        </div>
        <div class="window-buttons">
            <button aria-label="Minimize"><svg viewBox="0 0 12 12"><path d="M1 6.500h10" stroke="#888"/></svg></button>
            <button aria-label="Restore"><svg viewBox="0 0 12 12"><path d="M1.500 3.500h7v7h-7zM3.500 3.500v-2h7v7h-2" fill="none" stroke="#888"/></svg></button>
            <button aria-label="Close"><svg viewBox="0 0 12 12"><path d="M1 1l10 10M11 1L1 11" stroke="#888"/></svg></button>
        </div>
    </header>

    <nav class="ribbon-tabs">
        <button class="active">Home</button><button>Insert</button><button>Annotate</button><button>Parametric</button><button>View</button><button>Manage</button><button>Output</button><button>Add-ins</button><button>A360</button><button>Express Tools</button><button>Featured Apps</button><button>BIM 360</button><button>Performance</button>
        <button class="ribbon-min" aria-label="Minimize ribbon"><svg viewBox="0 0 14 8"><rect width="14" height="8" rx="2" fill="#e4e6ec"/><path d="M4 6h6L7 2z" fill="#333"/></svg></button>
        <svg class="caret tiny"><use href="#caret"/></svg>
    </nav>

    <section class="ribbon">
        <div class="panel draw">
            <div class="tools">
                <button class="big"><svg><use href="#line"/></svg>Line</button>
                <button class="big"><svg><use href="#pline"/></svg>Polyline</button>
                <button class="big"><svg><use href="#circle"/></svg>Circle<svg class="caret tiny"><use href="#caret"/></svg></button>
                <button class="big"><svg><use href="#arc"/></svg>Arc<svg class="caret tiny"><use href="#caret"/></svg></button>
                <div class="stack">
                    <button class="small" aria-label="Rectangle"><svg><use href="#rect"/></svg><svg class="caret tiny"><use href="#caret"/></svg></button>
                    <button class="small" aria-label="Ellipse"><svg><use href="#ellipse"/></svg><svg class="caret tiny"><use href="#caret"/></svg></button>
                    <button class="small" aria-label="Hatch"><svg><use href="#hatch"/></svg><svg class="caret tiny"><use href="#caret"/></svg></button>
                </div>
            </div>
            <button class="panel-title">Draw<svg class="caret"><use href="#caret"/></svg></button>
        </div>

        <div class="panel modify">
            <div class="tools">
                <div class="stack">
                    <button class="small"><svg><use href="#move"/></svg>Move</button>
                    <button class="small"><svg><use href="#copy"/></svg>Copy</button>
                    <button class="small"><svg><use href="#stretch"/></svg>Stretch</button>
                </div>
                <div class="stack">
                    <button class="small"><svg><use href="#rotate"/></svg>Rotate</button>
                    <button class="small"><svg><use href="#mirror"/></svg>Mirror</button>
                    <button class="small"><svg><use href="#scale"/></svg>Scale</button>
                </div>
                <div class="stack spread">
                    <button class="small"><svg><use href="#trim"/></svg>Trim<svg class="caret tiny"><use href="#caret"/></svg></button>
                    <button class="small"><svg><use href="#fillet"/></svg>Fillet<svg class="caret tiny"><use href="#caret"/></svg></button>
                    <button class="small"><svg><use href="#array"/></svg>Array<svg class="caret tiny"><use href="#caret"/></svg></button>
                </div>
                <div class="stack">
                    <button class="small" aria-label="Erase"><svg><use href="#erase"/></svg></button>
                    <button class="small" aria-label="Explode"><svg><use href="#explode"/></svg></button>
                    <button class="small" aria-label="Offset"><svg><use href="#offset"/></svg></button>
                </div>
            </div>
            <button class="panel-title">Modify<svg class="caret"><use href="#caret"/></svg></button>
        </div>

        <div class="panel annotation">
            <div class="tools">
                <button class="big"><svg><use href="#text"/></svg>Text<svg class="caret tiny"><use href="#caret"/></svg></button>
                <button class="big"><svg><use href="#dimension"/></svg>Dimension</button>
                <div class="stack spread">
                    <button class="small"><svg><use href="#linear"/></svg>Linear<svg class="caret tiny"><use href="#caret"/></svg></button>
                    <button class="small"><svg><use href="#leader"/></svg>Leader<svg class="caret tiny"><use href="#caret"/></svg></button>
                    <button class="small"><svg><use href="#table"/></svg>Table</button>
                </div>
            </div>
            <button class="panel-title">Annotation<svg class="caret"><use href="#caret"/></svg></button>
        </div>

        <div class="panel layers">
            <div class="tools">
                <button class="big pressed"><svg><use href="#layerprops"/></svg>Layer<br>Properties</button>
                <div class="layer-tools">
                    <div class="combo">
                        <svg><use href="#bulb"/></svg><svg><use href="#sun"/></svg><svg><use href="#unlock"/></svg><i class="swatch outlined"></i>
                        <select aria-label="Layer"><option>A CICLOVIA</option></select>
                        <svg class="caret"><use href="#caret"/></svg>
                    </div>
                    <div class="tool-row">
                        <button class="small" aria-label="Off"><svg><use href="#layoff"/></svg></button>
                        <button class="small" aria-label="Isolate"><svg><use href="#layiso"/></svg></button>
                        <button class="small" aria-label="Freeze"><svg><use href="#layfrz"/></svg></button>
                        <button class="small" aria-label="Lock"><svg><use href="#laylck"/></svg></button>
                        <button class="small"><svg><use href="#laycur"/></svg>Make Current</button>
                    </div>
                    <div class="tool-row">
                        <button class="small" aria-label="Turn all on"><svg><use href="#layon"/></svg></button>
                        <button class="small" aria-label="Unisolate"><svg><use href="#layuniso"/></svg></button>
                        <button class="small" aria-label="Thaw"><svg><use href="#layunfrz"/></svg></button>
                        <button class="small" aria-label="Unlock"><svg><use href="#layulk"/></svg></button>
                        <button class="small"><svg><use href="#laymch"/></svg>Match Layer</button>
                    </div>
                </div>
            </div>
            <button class="panel-title">Layers<svg class="caret"><use href="#caret"/></svg></button>
        </div>

        <div class="panel block">
            <div class="tools">
                <button class="big"><svg><use href="#insert"/></svg>Insert<svg class="caret tiny"><use href="#caret"/></svg></button>
                <div class="stack spread">
                    <button class="small"><svg><use href="#create"/></svg>Create</button>
                    <button class="small"><svg><use href="#edit"/></svg>Edit</button>
                    <button class="small"><svg><use href="#attr"/></svg>Edit Attributes<svg class="caret tiny"><use href="#caret"/></svg></button>
                </div>
            </div>
            <button class="panel-title">Block<svg class="caret"><use href="#caret"/></svg></button>
        </div>

        <div class="panel props">
            <div class="tools">
                <button class="big"><svg><use href="#matchprops"/></svg>Match<br>Properties</button>
                <div class="stack">
                    <button class="small" aria-label="Object color"><svg><use href="#wheel"/></svg></button>
                    <button class="small" aria-label="Lineweight"><svg><use href="#weights"/></svg></button>
                    <button class="small" aria-label="Linetype"><svg><use href="#types"/></svg></button>
                </div>
                <div class="combos">
                    <div class="combo"><i class="swatch"></i><select aria-label="Object color"><option>ByLayer</option></select><svg class="caret"><use href="#caret"/></svg></div>
                    <div class="combo"><i class="rule"></i><select aria-label="Lineweight"><option>ByLayer</option></select><svg class="caret"><use href="#caret"/></svg></div>
                    <div class="combo"><i class="rule"></i><select aria-label="Linetype"><option>ByLayer</option></select><svg class="caret"><use href="#caret"/></svg></div>
                </div>
            </div>
            <button class="panel-title">Properties<svg class="caret"><use href="#caret"/></svg><svg class="launch"><use href="#launch"/></svg></button>
        </div>

        <div class="panel groups">
            <div class="tools">
                <button class="big"><svg><use href="#group"/></svg>Group</button>
                <div class="stack">
                    <button class="small" aria-label="Ungroup"><svg><use href="#ungroup"/></svg></button>
                    <button class="small" aria-label="Group edit"><svg><use href="#groupedit"/></svg></button>
                    <button class="small pressed" aria-label="Group selection"><svg><use href="#groupsel"/></svg></button>
                </div>
            </div>
            <button class="panel-title">Groups<svg class="caret"><use href="#caret"/></svg></button>
        </div>

        <div class="panel utilities">
            <div class="tools">
                <button class="big"><svg><use href="#measure"/></svg>Measure<svg class="caret tiny"><use href="#caret"/></svg></button>
                <div class="stack">
                    <button class="small" aria-label="Quick select"><svg><use href="#quickselect"/></svg></button>
                    <button class="small" aria-label="ID point"><svg><use href="#target"/></svg></button>
                    <button class="small" aria-label="Calculator"><svg><use href="#calc"/></svg></button>
                </div>
            </div>
            <button class="panel-title">Utilities<svg class="caret"><use href="#caret"/></svg></button>
        </div>

        <div class="panel clipboard">
            <div class="tools">
                <button class="big"><svg><use href="#paste"/></svg>Paste<svg class="caret tiny"><use href="#caret"/></svg></button>
                <div class="stack">
                    <button class="small" aria-label="Cut"><svg><use href="#cut"/></svg></button>
                    <button class="small" aria-label="Copy clip"><svg><use href="#clipcopy"/></svg></button>
                </div>
            </div>
            <button class="panel-title">Clipboard</button>
        </div>

        <div class="panel view">
            <div class="tools">
                <button class="big"><svg><use href="#base"/></svg>Base<svg class="caret tiny"><use href="#caret"/></svg></button>
            </div>
            <button class="panel-title">View<svg class="caret"><use href="#caret"/></svg><svg class="launch"><use href="#launch"/></svg></button>
        </div>
    </section>

    <nav class="file-tabs">
        <button class="file-tab start">Start</button>
        <button class="file-tab active">CALLE CHICHENITZA<svg class="close" viewBox="0 0 8 8"><path d="M1 1l6 6M7 1L1 7" stroke="#444" stroke-width="2"/></svg></button>
        <button class="file-tab add" aria-label="New drawing"><svg viewBox="0 0 8 8"><path d="M0 4h8M4 0v8" stroke="#ccc" stroke-width="2"/></svg></button>
    </nav>

    <main class="workspace">
        <section class="viewport">
            <div class="view-label">[−][Top][2D Wireframe]</div>
            <div class="doc-buttons">
                <button aria-label="Minimize drawing"><svg viewBox="0 0 12 12"><path d="M1 8h10v3H1z" fill="#fff"/></svg></button>
                <button aria-label="Restore drawing"><svg viewBox="0 0 12 12"><path d="M2 4h6v6H2zM4 4V2h7v7H8" fill="none" stroke="#fff" stroke-width="1.500"/></svg></button>
                <button aria-label="Close drawing"><svg viewBox="0 0 12 12"><path d="M2 2l8 8M10 2l-8 8" stroke="#fff" stroke-width="2"/></svg></button>
            </div>
            <div class="viewcube">
                <span class="north">N</span><span class="west">W</span><span class="east">E</span><span class="south">S</span>
                <button class="cube">TOP</button>
            </div>
            <svg class="crosshair" viewBox="0 0 98 98"><path d="M0 48.500h45M52 48.500h45M48.500 0v45M48.500 52v45M45.500 45.500h6v6h-6z" fill="none" stroke="#fff"/></svg>
            <svg class="ucs" viewBox="0 0 80 76"><path d="M5.500 16.500v50h51M.5 61.500h10v10H.500zM7 .5l6 7v6M19 .5l-6 7M59 53l14 13M73 53L59 66" fill="none" stroke="#ddd"/></svg>

            <div class="history">
                <p>Non Autodesk DWG.&nbsp; This DWG file was saved by a software application that was not developed or licensed by Autodesk.<br><span>Autodesk cannot guarantee the application compatibility or integrity of this file.</span></p>
                <p class="cmd">Command:</p>
                <p class="cmd">Command:</p>
            </div>
            <div class="command-line">
                <div class="command-grip">
                    <i class="grip"></i>
                    <button aria-label="Close command line"><svg viewBox="0 0 12 12"><path d="M2 2l8 8M10 2l-8 8" stroke="#fff" stroke-width="2"/></svg></button>
                    <button aria-label="Customize command line"><svg class="wrench"><use href="#wrench"/></svg></button>
                </div>
                <svg class="prompt"><use href="#prompt"/></svg>
                <svg class="caret tiny"><use href="#caret"/></svg>
                <i class="cursor"></i>
                <input type="text" aria-label="Command">
                <button aria-label="Command history"><svg class="history-up" viewBox="0 0 8 4"><path d="M0 4h8L4 0z" fill="#111"/></svg></button>
            </div>
        </section>

        <aside class="palettes">
            <section class="palette layer-manager">
                <h2>LAYER PROPERTIES MANAGER</h2>
                <div class="current-layer">
                    <span>Current layer: A CICLOVIA</span>
                    <div class="search"><input type="text" placeholder="Search for layer" aria-label="Search for layer"><svg><use href="#lens"/></svg></div>
                </div>
                <div class="palette-tools">
                    <button aria-label="New property filter"><svg><use href="#filter"/></svg></button>
                    <button aria-label="New group filter"><svg><use href="#folder"/></svg></button>
                    <i class="sep"></i>
                    <button class="states" aria-label="Layer states"><svg><use href="#states"/></svg></button>
                    <button aria-label="New layer"><svg><use href="#laynew"/></svg></button>
                    <button aria-label="New frozen layer"><svg><use href="#layvp"/></svg></button>
                    <button aria-label="Delete layer"><svg><use href="#laydel"/></svg></button>
                    <button aria-label="Set current"><svg><use href="#layset"/></svg></button>
                    <button class="push" aria-label="Refresh"><svg><use href="#refresh"/></svg></button>
                    <button aria-label="Settings"><svg><use href="#gear"/></svg></button>
                </div>
                <div class="layer-list">
                    <div class="filter-strip"><svg><use href="#chevrons"/></svg><svg><use href="#chevrons"/></svg></div>
                    <div class="table-wrap">
                        <table class="layer-table">
                            <thead><tr><th class="c-status">St...</th><th class="c-name">Name<svg class="sort" viewBox="0 0 10 5"><path d="M0 5h10L5 0z" fill="#aaa"/></svg></th><th class="c-on">On</th><th class="c-lock">Lock</th><th class="c-color"></th></tr></thead>
                            <tbody>
                                <tr><td><svg><use href="#layer"/></svg></td><td>000 simbolo</td><td><svg class="on"><use href="#on"/></svg></td><td><svg class="lock"><use href="#unlock"/></svg></td><td><i></i></td></tr>
                                <tr><td><svg><use href="#layer"/></svg></td><td>00 vialetas</td><td><svg class="on"><use href="#on"/></svg></td><td><svg class="lock"><use href="#unlock"/></svg></td><td><i></i></td></tr>
                                <tr><td><svg><use href="#layer"/></svg></td><td>00Señal carril...</td><td><svg class="on"><use href="#on"/></svg></td><td><svg class="lock"><use href="#unlock"/></svg></td><td><i></i></td></tr>
                                <tr class="selected"><td><svg><use href="#layer"/></svg></td><td>0</td><td><svg class="on"><use href="#on"/></svg></td><td><svg class="lock"><use href="#unlock"/></svg></td><td><i></i></td></tr>
                                <tr><td><svg><use href="#layer"/></svg></td><td>1-Trazo Señales</td><td><svg class="on"><use href="#on"/></svg></td><td><svg class="lock"><use href="#unlock"/></svg></td><td><i></i></td></tr>
                                <tr><td><svg><use href="#layer"/></svg></td><td>7-Trazo señales</td><td><svg class="on"><use href="#on"/></svg></td><td><svg class="lock"><use href="#unlock"/></svg></td><td><i></i></td></tr>
                                <tr><td><svg class="check"><use href="#check"/></svg></td><td>A CICLOVIA</td><td><svg class="on"><use href="#on"/></svg></td><td><svg class="lock"><use href="#unlock"/></svg></td><td><i></i></td></tr>
                                <tr><td><svg><use href="#layer"/></svg></td><td>a cotas layout</td><td><svg class="on"><use href="#on"/></svg></td><td><svg class="lock"><use href="#unlock"/></svg></td><td><i></i></td></tr>
                                <tr><td><svg><use href="#layer"/></svg></td><td>A S Horizontal</td><td><svg class="on"><use href="#on"/></svg></td><td><svg class="lock"><use href="#unlock"/></svg></td><td><i class="red"></i></td></tr>
                                <tr><td><svg><use href="#layer"/></svg></td><td>ANDADOR</td><td><svg class="on"><use href="#on"/></svg></td><td><svg class="lock"><use href="#unlock"/></svg></td><td><i></i></td></tr>
                                <tr><td><svg><use href="#layer"/></svg></td><td>arboles</td><td><svg class="on"><use href="#on"/></svg></td><td><svg class="lock"><use href="#unlock"/></svg></td><td><i class="green"></i></td></tr>
                                <tr><td><svg><use href="#layer"/></svg></td><td>AREAS BANQ...</td><td><svg class="on"><use href="#on"/></svg></td><td><svg class="lock"><use href="#unlock"/></svg></td><td><i></i></td></tr>
                                <tr><td><svg><use href="#layer"/></svg></td><td>BANQUETA</td><td><svg class="on"><use href="#on"/></svg></td><td><svg class="lock"><use href="#unlock"/></svg></td><td><i class="blue"></i></td></tr>
                                <tr><td><svg><use href="#layer"/></svg></td><td>banquetas</td><td><svg class="on"><use href="#on"/></svg></td><td><svg class="lock"><use href="#unlock"/></svg></td><td><i class="blue"></i></td></tr>
                                <tr><td><svg><use href="#layer"/></svg></td><td>Banquetas_ZCC</td><td><svg class="on"><use href="#on"/></svg></td><td><svg class="lock"><use href="#unlock"/></svg></td><td><i class="pink"></i></td></tr>
                            </tbody>
                        </table>
                        <div class="hscroll"><svg><use href="#left"/></svg><i></i><svg><use href="#right"/></svg></div>
                    </div>
                    <div class="vscroll"><svg><use href="#up"/></svg><i></i><svg><use href="#down"/></svg></div>
                </div>
                <div class="layer-status">
                    <button aria-label="Layer filter"><svg><use href="#isolate"/></svg><svg class="caret dark"><use href="#caret"/></svg></button>
                    <span>All: 60 layers displayed of 60 total layers</span>
                </div>
            </section>

            <section class="palette properties">
                <h2>PROPERTIES</h2>
                <div class="selection">
                    <div class="selection-box"><select aria-label="Selection"><option>No selection</option></select><span><svg class="caret tiny"><use href="#caret"/></svg></span></div>
                    <button aria-label="Toggle pickadd"><svg><use href="#pickadd"/></svg></button>
                    <button aria-label="Select objects"><svg><use href="#pick"/></svg></button>
                    <button aria-label="Quick select"><svg><use href="#quickselect"/></svg></button>
                </div>
                <div class="property-scroll">
                    <div class="property-groups">
                        <h3>General<button aria-label="Collapse General"></button></h3>
                        <table>
                            <tr><th>Color</th><td><i class="chip"></i>ByLayer</td></tr>
                            <tr><th>Layer</th><td>A CICLOVIA</td></tr>
                            <tr><th>Linetype</th><td><i class="rule"></i>ByLayer</td></tr>
                            <tr><th>Linetype scale</th><td>1.0000</td></tr>
                            <tr><th>Lineweight</th><td><i class="rule"></i>ByLayer</td></tr>
                            <tr><th>Transparency</th><td>ByLayer</td></tr>
                            <tr><th>Thickness</th><td>0.0000</td></tr>
                        </table>
                        <h3>3D Visualization<button aria-label="Collapse 3D Visualization"></button></h3>
                        <table>
                            <tr><th>Material</th><td>ByLayer</td></tr>
                        </table>
                        <h3>Plot style<button aria-label="Collapse Plot style"></button></h3>
                        <table>
                            <tr><th>Plot style</th><td class="off">ByColor</td></tr>
                            <tr><th>Plot style table</th><td>None</td></tr>
                            <tr><th>Plot table attach...</th><td class="off">Model</td></tr>
                            <tr><th>Plot table type</th><td class="off">Not available</td></tr>
                        </table>
                        <h3>View<button aria-label="Collapse View"></button></h3>
                        <table>
                            <tr><th>Center X</th><td class="off">520963.4299</td></tr>
                            <tr><th>Center Y</th><td class="off">2342692.9997</td></tr>
                        </table>
                    </div>
                    <i class="thumb"></i>
                </div>
            </section>
        </aside>
    </main>

    <footer class="statusbar">
        <nav class="layout-tabs">
            <button class="active">Model</button><button>Layout1</button><button>Layout2</button><button class="add" aria-label="New layout"><svg viewBox="0 0 8 8"><path d="M0 4h8M4 0v8" stroke="#ccc" stroke-width="2"/></svg></button>
        </nav>
        <div class="status-tools">
            <div class="cell model"><button>MODEL</button></div>
            <div class="cell"><button aria-label="Grid"><svg><use href="#grid"/></svg></button><button aria-label="Snap"><svg><use href="#snap"/></svg></button><svg class="caret"><use href="#caret"/></svg></div>
            <div class="cell"><button aria-label="Ortho"><svg><use href="#ortho"/></svg></button><button aria-label="Polar tracking"><svg><use href="#polar"/></svg></button><svg class="caret"><use href="#caret"/></svg><button aria-label="Isometric drafting"><svg><use href="#iso"/></svg></button><svg class="caret"><use href="#caret"/></svg></div>
            <div class="cell"><button aria-label="Object snap tracking"><svg><use href="#otrack"/></svg></button><button aria-label="Object snap"><svg><use href="#osnap"/></svg></button><svg class="caret"><use href="#caret"/></svg></div>
            <div class="cell"><button class="lit" aria-label="Annotation visibility"><svg><use href="#annovis"/></svg></button><button class="dim" aria-label="Auto scale"><svg><use href="#annoauto"/></svg></button><button class="dim" aria-label="Annotation scale"><svg><use href="#scaleicon"/></svg></button><button>1:1</button><svg class="caret"><use href="#caret"/></svg></div>
            <div class="cell"><button aria-label="Workspace"><svg><use href="#gear"/></svg></button><svg class="caret"><use href="#caret"/></svg></div>
            <div class="cell"><button aria-label="Annotation monitor"><svg><use href="#plus"/></svg></button></div>
            <div class="cell"><button aria-label="Isolate objects"><svg><use href="#shapes"/></svg></button></div>
            <div class="cell"><button aria-label="Hardware acceleration"><svg><use href="#perf"/></svg></button></div>
            <div class="cell"><button aria-label="Plot notification"><svg class="wide"><use href="#trace"/></svg></button><button aria-label="CAD standards"><svg class="wide"><use href="#warn"/></svg></button></div>
            <div class="cell"><button aria-label="Clean screen"><svg><use href="#clean"/></svg></button><button aria-label="Customization"><svg><use href="#burger"/></svg></button></div>
        </div>
    </footer>

    <footer class="taskbar">
        <button aria-label="Windows"><svg><use href="#win"/></svg></button>
        <button aria-label="Cortana"><svg><use href="#cortana"/></svg></button>
        <button aria-label="Task view"><svg class="wide"><use href="#taskview"/></svg></button>
        <button aria-label="Edge"><svg><use href="#edge"/></svg></button>
        <button class="running" aria-label="File Explorer"><svg><use href="#files"/></svg></button>
        <button class="running" aria-label="Chrome"><svg><use href="#chrome"/></svg></button>
        <button aria-label="Google Earth"><svg><use href="#earth"/></svg></button>
        <button aria-label="OneNote"><svg><use href="#onenote"/></svg></button>
        <button aria-label="QGIS"><svg><use href="#qgis"/></svg></button>
        <button aria-label="Snipping Tool"><svg><use href="#snip"/></svg></button>
        <button><span class="adobe ps">Ps</span></button>
        <button><span class="adobe ai">Ai</span></button>
        <button aria-label="Spotify"><svg><use href="#spotify"/></svg></button>
        <button aria-label="Google Earth Pro"><svg><use href="#earthpro"/></svg></button>
        <button class="running current" aria-label="AutoCAD"><svg class="acad"><use href="#logo"/></svg></button>
        <div class="tray">
            <svg class="tray-up" viewBox="0 0 12 8"><path d="M1 7l5-5 5 5" fill="none" stroke="#fff"/></svg>
            <svg class="tray-battery"><use href="#battery"/></svg>
            <svg class="tray-icon"><use href="#wifi"/></svg>
            <svg class="tray-icon"><use href="#sound"/></svg>
            <span class="lang">ESP</span>
            <time>11:08 a. m.</time>
            <svg class="tray-note"><use href="#note"/></svg>
            <i class="desktop-peek"></i>
        </div>
    </footer>
</body>
</html>
```
FILE: styles.css
```
* {
    box-sizing: border-box;
    margin: 0;
    padding: 0;
}

body {
    display: flex;
    flex-direction: column;
    height: 100vh;
    overflow: hidden;
    background-color: #383838;
    color: #f0f0f0;
    font: 12px/16px 'Open Sans', 'Noto Sans', sans-serif;
}

button, input, select {
    font: inherit;
    color: inherit;
    background: none;
    border: none;
    outline: none;
}

button {
    display: flex;
    align-items: center;
    justify-content: center;
    white-space: nowrap;
}

select {
    appearance: none;
}

svg {
    display: block;
    flex: none;
    width: 16px;
    height: 16px;
}

.sprite {
    position: absolute;
    width: 0;
    height: 0;
}

svg.caret {
    width: 8px;
    height: 4px;
}

svg.caret.tiny {
    width: 6px;
    height: 3px;
}

svg.caret.muted {
    color: #aaa;
}

svg.caret.dark {
    color: #1c1c1c;
}

/* Title bar */
.titlebar {
    position: relative;
    display: flex;
    flex: none;
    height: 24px;
    background-color: #fff;
}

.app-button {
    position: absolute;
    z-index: 2;
    top: 0;
    left: 0;
    gap: 3px;
    width: 41px;
    height: 41px;
    padding-bottom: 8px;
    border: 1px solid #111;
    background: linear-gradient(#b5b5b5, #636363);
    box-shadow: inset 0 0 0 1px #ccc;
}

.logo {
    width: 24px;
    height: 26px;
}

.quick-access {
    display: flex;
    align-items: center;
    gap: 8px;
    width: 255px;
    padding-left: 50px;
    background: linear-gradient(#6c6c6c, #a0a0a0 8%, #555);
}

.quick-access button {
    width: 16px;
}

.quick-access .qa-more {
    width: 8px;
}

.quick-access .caret {
    margin: 0 -1px;
}

svg.more {
    width: 8px;
    height: 8px;
}

.app-title {
    display: flex;
    flex: 1;
    gap: 12px;
    align-items: center;
    justify-content: center;
    color: #111;
    font-size: 12px;
    font-weight: 400;
}

.infocenter {
    display: flex;
    align-items: center;
    gap: 8px;
    width: 447px;
    background: linear-gradient(#6c6c6c, #a0a0a0 8%, #555);
}

.play {
    width: 4px;
    height: 8px;
    margin-left: 5px;
}

.keyword {
    width: 180px;
    height: 22px;
    margin: 0 -4px 0 -3px;
    padding: 0 4px;
    border: 1px solid #3a3a3a;
    background-color: #787878;
}

.keyword::placeholder {
    color: #c8c8c8;
    font-style: italic;
    opacity: 1;
}

.sign-in {
    gap: 5px;
}

.sign-caret {
    margin-left: auto;
}

.help {
    padding-left: 10px;
    border-left: 1px solid #777;
}

.infocenter .caret:last-child {
    margin-right: 4px;
}

.window-buttons {
    display: flex;
    width: 163px;
    padding-left: 25px;
}

.window-buttons button {
    flex: 1;
}

.window-buttons svg {
    width: 12px;
    height: 12px;
}

/* Ribbon tabs */
.ribbon-tabs {
    display: flex;
    flex: none;
    align-items: stretch;
    height: 21px;
    padding-left: 47px;
    border-top: 1px solid #2b2b2b;
    border-bottom: 1px solid #2b2b2b;
    background-color: #545454;
}

.ribbon-tabs button {
    padding: 0 8px 0 9px;
    color: #cfcfcf;
}

.ribbon-tabs .active {
    margin: 2px 0 -1px;
    padding: 0 7px 1px;
    border: 1px solid #2b2b2b;
    border-bottom: none;
    background: linear-gradient(#7a7a7a, #5b5b5b);
    color: #fff;
}

.ribbon-min svg {
    width: 14px;
    height: 8px;
    margin-left: 14px;
}

.ribbon-tabs > .caret {
    align-self: center;
    margin-left: -1px;
}

/* Ribbon */
.ribbon {
    display: flex;
    flex: none;
    height: 99px;
    padding: 0 1px;
    border-bottom: 1px solid #999;
    background: linear-gradient(#565656, #383838);
}

.panel {
    display: flex;
    flex: none;
    flex-direction: column;
    border-left: 1px solid #6b6b6b;
    border-right: 1px solid #3d3d3d;
    background-color: #5b5b5b;
}

.panel-title {
    position: relative;
    gap: 7px;
    height: 20px;
    padding-bottom: 2px;
    background: linear-gradient(#505050, #464646);
}

.launch {
    position: absolute;
    right: 4px;
    width: 6px;
    height: 6px;
}

.tools {
    display: grid;
    flex: 1;
    align-items: start;
    padding-top: 4px;
}

.big {
    flex-direction: column;
    justify-content: flex-start;
    height: 72px;
    padding-top: 2px;
    line-height: 15px;
}

.big > svg:first-child {
    width: 32px;
    height: 32px;
    margin-bottom: 4px;
}

.big .caret {
    margin-top: 3px;
}

.stack {
    display: grid;
    grid-auto-rows: 24px;
}

.small {
    justify-content: flex-start;
    gap: 5px;
    height: 24px;
}

.spread .caret {
    margin-left: auto;
}

.pressed {
    border: 1px solid #2c3f63;
    background: linear-gradient(#8babdb, #4e6a97);
}

.draw {
    width: 225px;
}

.draw .tools {
    grid-template-columns: 41px 46px 54px 40px 38px;
}

.draw .stack {
    padding-left: 4px;
}

.modify {
    width: 250px;
}

.modify .tools {
    grid-template-columns: 72px 69px 61px 16px;
    padding-left: 6px;
}

.modify .stack:last-child {
    padding-left: 14px;
}

.annotation {
    width: 188px;
}

.annotation .tools {
    grid-template-columns: 46px 61px 70px;
}

.annotation .stack {
    padding-left: 4px;
}

.layers {
    width: 274px;
}

.layers .tools {
    grid-template-columns: 60px 210px;
    padding-left: 1px;
}

.tool-row {
    display: flex;
    gap: 8px;
    padding-left: 4px;
}

.combo {
    display: flex;
    align-items: center;
    gap: 4px;
    height: 22px;
    margin-bottom: 2px;
    padding: 0 2px 0 5px;
    border: 1px solid #333;
    background: linear-gradient(#606060, #505050);
}

.layers .combo {
    margin: 1px 0 1px 1px;
    padding-left: 3px;
}

.combo select {
    flex: 1;
    min-width: 0;
}

.swatch {
    width: 16px;
    height: 16px;
    background-color: #fff;
}

.swatch.outlined {
    width: 13px;
    height: 13px;
    margin: 0 2px;
    outline: 1px solid #111;
}

.rule {
    display: inline-block;
    width: 58px;
    height: 1px;
    background-color: #fff;
}

.block {
    width: 161px;
}

.block .tools {
    grid-template-columns: 42px 111px;
}

.props {
    width: 264px;
}

.props .tools {
    grid-template-columns: 63px 18px 180px;
}

.combos {
    padding-top: 1px;
}

.props .combo {
    gap: 3px;
    padding-left: 8px;
}

.props .swatch {
    margin: 0 7px 0 4px;
}

.groups {
    width: 69px;
}

.groups .tools {
    grid-template-columns: 43px 24px;
}

.groups .small {
    justify-content: center;
}

.utilities {
    width: 97px;
}

.utilities .tools {
    grid-template-columns: 70px 16px;
    column-gap: 3px;
}

.clipboard {
    width: 80px;
}

.clipboard .tools {
    grid-template-columns: 52px 16px;
    column-gap: 3px;
}

.view {
    width: 62px;
}

.view .panel-title {
    padding-right: 14px;
}

/* Drawing tabs */
.file-tabs {
    display: flex;
    flex: none;
    align-items: flex-end;
    height: 29px;
    padding-left: 14px;
    border-bottom: 4px solid #5b5b5b;
    background-color: #383838;
}

.file-tab {
    gap: 10px;
    height: 22px;
    padding: 1px 19px 0 12px;
    background: linear-gradient(#777, #5b5b5b);
    clip-path: polygon(0 100%, 4px 92%, 8px 55%, 12px 14%, 18px 0, calc(100% - 16px) 0, calc(100% - 10px) 14%, calc(100% - 6px) 60%, calc(100% - 3px) 92%, 100% 100%);
}

.file-tab.start {
    justify-content: flex-start;
    width: 129px;
    padding-left: 18px;
    background: #555;
    color: #bbb;
}

.file-tab svg {
    width: 8px;
    height: 8px;
}

.file-tab.add {
    width: 23px;
    height: 14px;
    margin: 0 0 3px;
    padding: 0;
    border-radius: 8px 8px 6px 0;
    background: #555;
    clip-path: none;
}

/* Workspace */
.workspace {
    display: flex;
    flex: 1;
    min-height: 0;
}

.viewport {
    position: relative;
    display: flex;
    flex: 1;
    flex-direction: column;
    justify-content: flex-end;
    align-items: flex-start;
    background-color: #212830;
}

.view-label {
    position: absolute;
    top: 6px;
    left: 3px;
}

.doc-buttons {
    position: absolute;
    top: 9px;
    right: 10px;
    display: flex;
    gap: 8px;
}

.doc-buttons svg {
    width: 12px;
    height: 12px;
}

.viewcube {
    position: absolute;
    top: 47px;
    right: 23px;
    display: grid;
    place-items: center;
    width: 120px;
    height: 120px;
    border: 13px solid #434a53;
    border-radius: 50%;
}

.viewcube span {
    position: absolute;
    color: #a7a9ab;
    font: bold 22px/22px 'Liberation Sans', sans-serif;
}

.north {
    top: -20px;
}

.south {
    bottom: -20px;
}

.west {
    left: -20px;
}

.east {
    right: -17px;
}

.cube {
    width: 52px;
    height: 52px;
    border: 10px solid #b4b4b4;
    background-color: #a3acb3;
    color: #4f565c;
    font-weight: 700;
}

.crosshair {
    position: absolute;
    top: 340px;
    left: 130px;
    width: 98px;
    height: 98px;
}

.ucs {
    position: absolute;
    bottom: 11px;
    left: 15px;
    width: 80px;
    height: 76px;
}

.history {
    margin-left: 410px;
    font: 12px/15px 'Liberation Mono', monospace;
}

.history p {
    width: max-content;
    padding: 0 2px;
    border-radius: 2px;
    background-color: #555658;
    color: #b8b8b8;
}

.history span {
    color: #d0d0d0;
}

.history .cmd {
    margin-top: 5px;
    background-color: #606060;
    color: #eee;
}

.command-line {
    display: flex;
    align-items: center;
    gap: 4px;
    width: 57%;
    height: 27px;
    margin: 2px 0 0 350px;
    border: 1px solid #666;
    background-color: #fff;
    color: #777;
}

.command-grip {
    display: flex;
    align-items: center;
    gap: 5px;
    align-self: stretch;
    width: 53px;
    padding-left: 3px;
    background: linear-gradient(#777, #444);
}

.command-grip svg {
    width: 12px;
    height: 12px;
}

.command-grip svg.wrench {
    width: 16px;
    height: 16px;
    margin-left: 3px;
}

.grip {
    width: 6px;
    height: 18px;
    background: repeating-linear-gradient(#aaa 0 2px, transparent 2px 3px);
}

.prompt {
    height: 14px;
}

.cursor {
    width: 1px;
    height: 15px;
    background-color: #111;
}

.command-line input {
    flex: 1;
    color: #111;
}

.history-up {
    width: 8px;
    height: 4px;
    margin-right: 3px;
}

/* Palettes */
.palettes {
    display: flex;
    flex: none;
    flex-direction: column;
    width: 292px;
    padding: 2px 0 3px 2px;
    background-color: #5b5b5b;
}

.palette {
    display: flex;
    flex: none;
    flex-direction: column;
    border-bottom: 1px solid #505050;
    border-radius: 4px;
}

.palette h2 {
    height: 21px;
    padding-left: 15px;
    border-radius: 4px 4px 0 0;
    background-color: #535353;
    font-size: 12px;
    font-weight: 400;
    line-height: 21px;
}

.current-layer {
    display: flex;
    justify-content: space-between;
    height: 28px;
    padding: 6px 0 0 4px;
}

.current-layer span {
    padding-top: 4px;
}

.search {
    display: flex;
    align-items: center;
    width: 125px;
    height: 16px;
    background-color: #656565;
}

.search input {
    flex: 1;
    min-width: 0;
}

.search input::placeholder {
    color: #aaa;
    opacity: 1;
}

.palette-tools {
    display: flex;
    align-items: center;
    gap: 7px;
    height: 28px;
    padding: 0 9px 4px 3px;
}

.palette-tools .states {
    margin-right: 6px;
}

.palette-tools .push {
    margin-left: auto;
}

.sep {
    width: 1px;
    height: 18px;
    background-color: #333;
}

.layer-list {
    display: flex;
    height: 309px;
}

.filter-strip {
    display: flex;
    flex-direction: column;
    justify-content: space-between;
    align-items: center;
    width: 20px;
    margin-right: 3px;
    padding: 5px 0 8px;
    border: 1px solid #535353;
}

.filter-strip svg {
    width: 10px;
    height: 8px;
}

.table-wrap {
    display: flex;
    flex: 1;
    flex-direction: column;
    min-width: 0;
    overflow: hidden;
}

.layer-table {
    width: 100%;
    table-layout: fixed;
    border-collapse: collapse;
}

.layer-table th {
    height: 22px;
    padding-left: 5px;
    border-right: 1px solid #4a4a4a;
    background-color: #656565;
    font-weight: 400;
    text-align: left;
}

.layer-table td {
    height: 18px;
    overflow: hidden;
    line-height: 17px;
    white-space: nowrap;
}

.layer-table td:nth-child(2) {
    padding-left: 3px;
    border-right: 2px solid #505050;
}

.c-status {
    width: 31px;
}

.c-name {
    width: 94px;
}

.c-on {
    width: 35px;
}

.c-color {
    width: 5px;
}

.sort {
    float: right;
    width: 9px;
    height: 5px;
    margin: 7px 2px 0 0;
}

.layer-table td:first-child svg {
    width: 16px;
    height: 8px;
    margin-left: 1px;
}

.layer-table td:first-child svg.check {
    height: 13px;
}

.layer-table svg.on {
    width: 8px;
    height: 14px;
    margin-left: 13px;
}

.layer-table svg.lock {
    margin-left: 33px;
}

.layer-table td i {
    display: block;
    width: 12px;
    height: 13px;
    margin-left: 3px;
    border: 1px solid #000;
    background-color: #fff;
}

.layer-table i.red {
    background-color: #f00;
}

.layer-table i.green {
    background-color: #0f0;
}

.layer-table i.blue {
    background-color: #00f;
}

.layer-table i.pink {
    background-color: #b5405a;
}

.layer-table .selected td {
    background-color: #949494;
    color: #111;
}

.hscroll, .vscroll {
    position: relative;
    z-index: 1;
    display: flex;
    flex: none;
    align-items: center;
    background-color: #f0f0f0;
    color: #555;
}

.hscroll {
    gap: 6px;
    height: 17px;
    margin-top: auto;
    padding: 0 5px;
}

.hscroll i {
    width: 36px;
    height: 17px;
    background-color: #cdcdcd;
}

.hscroll svg {
    width: 6px;
    height: 10px;
}

.hscroll svg:last-child, .vscroll svg:last-child {
    margin: 0 0 0 auto;
}

.vscroll {
    flex-direction: column;
    width: 18px;
    padding: 6px 0 22px;
}

.vscroll i {
    width: 16px;
    height: 64px;
    margin-top: 5px;
    background-color: #cdcdcd;
}

.vscroll svg {
    width: 10px;
    height: 6px;
}

.vscroll svg:last-child {
    margin: auto 0 0;
}

.layer-status {
    display: flex;
    align-items: center;
    gap: 9px;
    height: 34px;
    padding-top: 3px;
}

.layer-status button {
    gap: 4px;
    width: 30px;
    height: 22px;
    border: 1px solid #ccc;
    border-radius: 2px;
}

.layer-status svg.caret {
    width: 7px;
}

.palette.properties {
    flex: 1;
    min-height: 0;
    margin-top: 2px;
}

.selection {
    display: flex;
    align-items: center;
    gap: 9px;
    height: 38px;
    padding: 6px 10px 0 5px;
}

.selection-box {
    display: flex;
    flex: 1;
    height: 24px;
    border: 1px solid #333;
    background: linear-gradient(#6c6c6c, #555);
}

.selection-box select {
    flex: 1;
    padding-left: 3px;
}

.selection-box span {
    display: grid;
    place-items: center;
    width: 14px;
    border-left: 1px solid #333;
}

.property-scroll {
    display: flex;
    flex: 1;
    min-height: 0;
    margin: 0 2px 10px 10px;
}

.property-groups {
    flex: 1;
    overflow: hidden;
}

.property-groups h3 {
    display: flex;
    align-items: center;
    justify-content: space-between;
    height: 20px;
    padding: 0 7px 0 6px;
    border: 1px solid #333;
    background-color: #4a4a4a;
    font-size: 12px;
    font-weight: 700;
}

.property-groups h3 button {
    width: 6px;
    height: 2px;
    background-color: #eee;
}

.property-groups table {
    width: calc(100% - 17px);
    margin: 0 0 3px 17px;
    table-layout: fixed;
    border-collapse: collapse;
}

.property-groups th, .property-groups td {
    height: 18px;
    border: 1px solid #505050;
    border-top: none;
    line-height: 17px;
    text-align: left;
    white-space: nowrap;
}

.property-groups th {
    width: 110px;
    padding: 1px 0 0 6px;
    font-weight: 400;
}

.property-groups td {
    padding: 0 0 1px 2px;
}

.property-groups .off {
    color: #aaa;
}

.property-groups .rule {
    margin: 0 5px 4px 2px;
}

.chip {
    display: inline-block;
    width: 10px;
    height: 10px;
    margin: 0 6px -1px 1px;
    border: 1px solid #000;
    border-radius: 2px;
    background-color: #fff;
}

.thumb {
    width: 5px;
    height: 222px;
    margin-left: 10px;
    border-radius: 3px;
    background-color: #444;
}

/* Status bar */
.statusbar {
    display: flex;
    flex: none;
    justify-content: space-between;
    height: 29px;
    border-top: 1px solid #555;
    background-color: #383838;
}

.layout-tabs {
    display: flex;
    padding-left: 9px;
}

.layout-tabs button {
    width: 65px;
    height: 17px;
    background: linear-gradient(#484848, #5b5b5b);
    color: #bbb;
    clip-path: polygon(0 0, 4px 8%, 8px 60%, 12px 92%, 16px 100%, calc(100% - 14px) 100%, calc(100% - 8px) 92%, calc(100% - 4px) 50%, 100% 0);
}

.layout-tabs .active {
    width: 61px;
    background: linear-gradient(#5b5b5b, #888);
    color: #fff;
    font-weight: 700;
}

.layout-tabs .add {
    width: 24px;
    margin-left: 3px;
    border-radius: 0 0 10px 4px;
    clip-path: none;
}

.layout-tabs svg {
    width: 8px;
    height: 8px;
}

.status-tools {
    display: flex;
    padding: 0 1px 1px 0;
    background-color: #444;
}

.cell {
    display: flex;
    align-items: center;
    gap: 6px;
    padding: 0 5px;
    border: 1px solid #777;
    background-color: #505050;
}

.cell.model {
    padding: 0 3px;
}

.lit {
    color: #2b95ff;
}

.dim {
    color: #aaa;
}

svg.wide {
    width: 18px;
    height: 18px;
}

/* Taskbar */
.taskbar {
    display: flex;
    flex: none;
    height: 30px;
    background-color: #101010;
}

.taskbar button {
    width: 37px;
}

.taskbar button:first-child {
    width: 36px;
}

.taskbar .running {
    border-bottom: 2px solid #76b9ed;
    border-left: 4px solid #101010;
    border-right: 4px solid #101010;
}

.taskbar .current {
    border-left: none;
    border-right: none;
    background-color: #333;
}

.acad {
    padding: 2px;
    background-color: #f5e6e4;
}

.adobe {
    width: 16px;
    height: 16px;
    border: 1px solid;
    font-size: 9px;
    font-weight: 700;
    line-height: 14px;
}

.ps {
    color: #31c5f0;
}

.ai {
    color: #ff7c00;
}

.tray {
    display: flex;
    align-items: center;
    gap: 10px;
    margin-left: auto;
    padding-right: 4px;
}

.tray-up {
    width: 12px;
    height: 8px;
}

.tray-battery {
    height: 10px;
}

.tray-icon {
    width: 14px;
    height: 14px;
}

.lang {
    margin: 0 4px 0 3px;
}

.tray-note {
    margin: 0 10px 0 4px;
}

.desktop-peek {
    width: 1px;
    height: 100%;
    background-color: #777;
}
```
